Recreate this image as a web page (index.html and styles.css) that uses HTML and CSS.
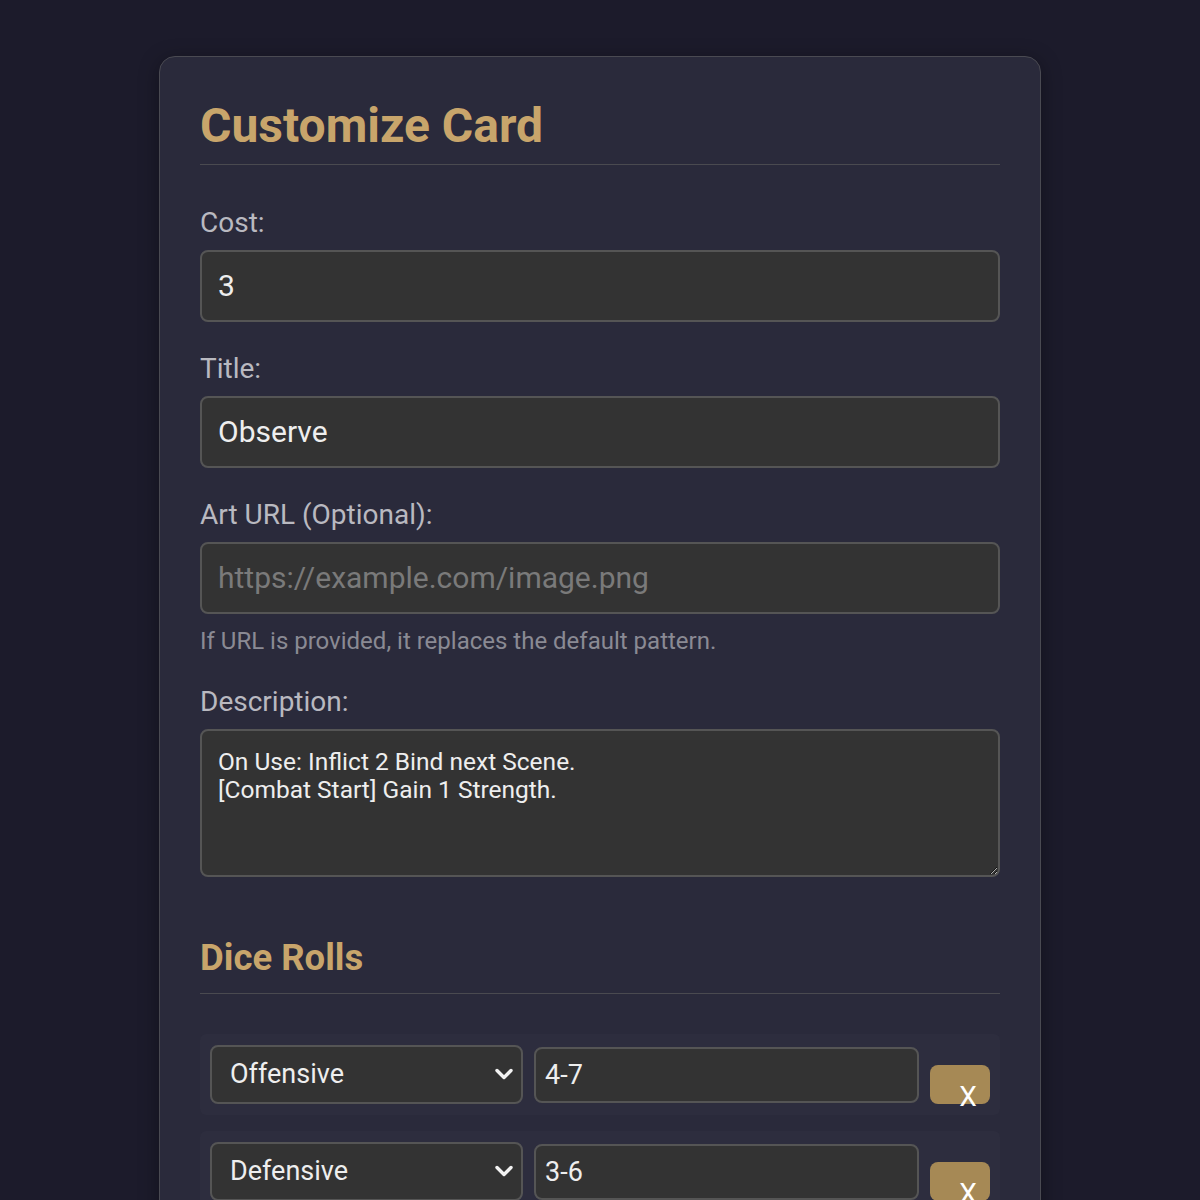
FILE: index.html
```html
<!DOCTYPE html>
<html lang="en">
<head>
    <meta charset="UTF-8">
    <meta name="viewport" content="width=device-width, initial-scale=1.0">
    <title>Customize Card</title>
    <link rel="stylesheet" href="styles.css">
</head>
<body>
    <form class="editor">
        <h2 class="editor-title">Customize Card</h2>

        <div class="field">
            <label for="cost">Cost:</label>
            <input type="text" id="cost" value="3">
        </div>

        <div class="field">
            <label for="title">Title:</label>
            <input type="text" id="title" value="Observe">
        </div>

        <div class="field">
            <label for="art">Art URL (Optional):</label>
            <input type="text" id="art" placeholder="https://example.com/image.png">
            <p class="hint">If URL is provided, it replaces the default pattern.</p>
        </div>

        <div class="field">
            <label for="desc">Description:</label>
            <textarea id="desc">On Use: Inflict 2 Bind next Scene.
[Combat Start] Gain 1 Strength.</textarea>
        </div>

        <h3 class="section-title">Dice Rolls</h3>

        <div class="dice-row">
            <div class="select-wrap">
                <select>
                    <option selected>Offensive</option>
                    <option>Defensive</option>
                </select>
                <svg class="chevron" width="18" height="12" viewBox="0 0 18 12"><path d="M2 2.5 L9 9.5 L16 2.5" fill="none" stroke="#f2f2f2" stroke-width="3.4" stroke-linecap="round" stroke-linejoin="round"/></svg>
            </div>
            <input type="text" class="range" value="4-7">
            <button type="button" class="remove">X</button>
        </div>

        <div class="dice-row">
            <div class="select-wrap">
                <select>
                    <option>Offensive</option>
                    <option selected>Defensive</option>
                </select>
                <svg class="chevron" width="18" height="12" viewBox="0 0 18 12"><path d="M2 2.5 L9 9.5 L16 2.5" fill="none" stroke="#f2f2f2" stroke-width="3.4" stroke-linecap="round" stroke-linejoin="round"/></svg>
            </div>
            <input type="text" class="range" value="3-6">
            <button type="button" class="remove">X</button>
        </div>
    </form>
</body>
</html>
```

FILE: styles.css
```css
body {
    font-family: Roboto, "Liberation Sans", Arial, sans-serif;
    background-color: #1c1b2b;
    margin: 0;
    padding: 56px 0 0;
    color: #eeeeee;
}

.editor {
    width: 800px;
    margin: 0 auto;
    padding: 40px;
    background-color: #2a2a3b;
    border: 1px solid #4a4a52;
    border-radius: 16px;
    box-shadow: 0 4px 20px rgba(0, 0, 0, 0.35);
}

.editor-title {
    margin: 0 0 41px;
    padding-bottom: 10px;
    font-size: 48px;
    font-weight: 700;
    color: #c8a56b;
    border-bottom: 1px solid #4a4a50;
}

.field {
    margin-bottom: 30px;
}

label {
    display: block;
    font-size: 28px;
    color: #b9b9c0;
    margin-bottom: 11px;
}

input, select, textarea {
    width: 100%;
    box-sizing: border-box;
    font-family: inherit;
    color: #eeeeee;
    background-color: #333333;
    border: 2px solid #555555;
    border-radius: 8px;
    outline: none;
}

.field input {
    font-size: 30px;
    padding: 16px 16px 17px;
}

input::placeholder {
    color: #7a7a7a;
}

.hint {
    margin: 13px 0 0;
    font-size: 24px;
    color: #8a8a94;
}

textarea {
    display: block;
    height: 148px;
    padding: 17px 16px;
    font-size: 24.5px;
    line-height: 28px;
    resize: vertical;
    color-scheme: dark;
}

.section-title {
    margin: 59px 0 40px;
    padding-bottom: 14px;
    font-size: 36.5px;
    font-weight: 700;
    color: #c8a56b;
    border-bottom: 1px solid #4a4a50;
}

.dice-row {
    display: grid;
    grid-template-columns: 313px 1fr 60px;
    gap: 11px;
    align-items: center;
    padding: 11px 10px;
    margin-bottom: 16px;
    background-color: #2d2d3e;
    border-radius: 6px;
}

.select-wrap {
    position: relative;
}

select {
    appearance: none;
    display: block;
    font-size: 27px;
    padding: 11px 40px 12px 18px;
}

.chevron {
    position: absolute;
    right: 10px;
    top: 23px;
    pointer-events: none;
}

.range {
    font-size: 27px;
    padding: 10px 9px;
}

.remove {
    height: 39px;
    margin-top: 20px;
    box-sizing: border-box;
    padding: 18px 0 0 16px;
    font-family: inherit;
    font-size: 28px;
    line-height: 1;
    color: #ffffff;
    background-color: #a68955;
    border: none;
    border-radius: 8px;
    cursor: pointer;
}
```
